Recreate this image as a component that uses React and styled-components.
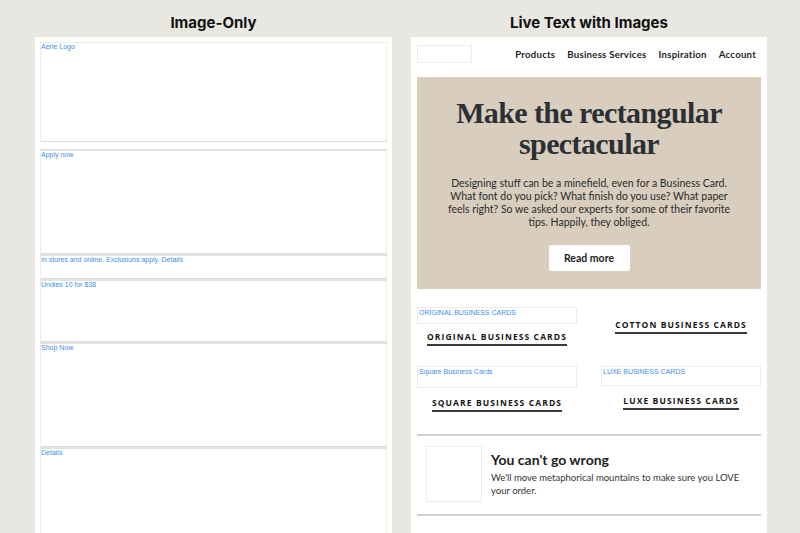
import React from 'react'
import styled, { createGlobalStyle } from 'styled-components'

const GlobalStyle = createGlobalStyle`
  html, body {
    margin: 0;
    padding: 0;
    background: #e9e7e2;
    height: 533px;
    overflow: hidden;
  }
  * {
    box-sizing: border-box;
  }
`

const Page = styled.div`
  display: grid;
  grid-template-columns: 357px 356px;
  column-gap: 19px;
  padding-left: 35px;
  height: 533px;
`

const Column = styled.div`
  display: flex;
  flex-direction: column;
  min-height: 0;
`

const Title = styled.h2`
  margin: 0;
  height: 37px;
  padding-top: 14px;
  text-align: center;
  font-family: Inter, 'Liberation Sans', sans-serif;
  font-weight: 700;
  font-size: 15px;
  line-height: 18px;
  color: #111;
`

const Panel = styled.div`
  flex: 1;
  background: #fff;
  padding: ${(p) => p.$pad};
  overflow: hidden;
`

/* left panel: broken image boxes */

const ImageBox = styled.div`
  height: ${(p) => p.$h}px;
  margin-top: ${(p) => p.$gap || 0}px;
  border: 1px solid #ececec;
  border-top: ${(p) => (p.$strong ? '2px solid #e2e2e2' : '1px solid #ececec')};
  border-bottom: 1px solid #dcdcdc;
  padding: 0;
  font-family: 'Liberation Sans', Arial, sans-serif;
  font-size: 7px;
  line-height: 8px;
  color: #3d8fe8;
`

/* right panel */

const Header = styled.div`
  display: flex;
  align-items: center;
  justify-content: space-between;
  height: 20px;
  padding-right: 5px;
  margin: 1px 0 13px;
`

const LogoBox = styled.div`
  width: 55px;
  height: 18px;
  border: 1px solid #ececec;
`

const Nav = styled.nav`
  display: flex;
  gap: 12px;
`

const NavLink = styled.a`
  font-family: Lato, 'Open Sans', sans-serif;
  font-weight: 700;
  font-size: 9.6px;
  letter-spacing: 0.25px;
  color: #1d1d1d;
`

const Hero = styled.section`
  background: #d9cebe;
  height: 212px;
  display: flex;
  flex-direction: column;
  align-items: center;
  padding-top: 20px;
`

const HeroTitle = styled.h1`
  margin: 0;
  font-family: 'Liberation Serif', 'Times New Roman', serif;
  font-weight: 700;
  font-size: 30px;
  line-height: 31px;
  letter-spacing: -0.6px;
  text-align: center;
  color: #2b3035;
  width: 280px;
`

const HeroText = styled.p`
  margin: 18px 0 0;
  width: 290px;
  font-family: Lato, 'Open Sans', sans-serif;
  font-size: 10.5px;
  line-height: 13px;
  text-align: center;
  color: #2a2a2a;
`

const Button = styled.button`
  margin-top: 16px;
  width: 81px;
  height: 26px;
  border: none;
  border-radius: 2px;
  background: #fff;
  font-family: Lato, 'Open Sans', sans-serif;
  font-weight: 700;
  font-size: 10.5px;
  color: #1d1d1d;
`

const CardGrid = styled.div`
  display: grid;
  grid-template-columns: 160px 160px;
  justify-content: space-between;
  row-gap: 20px;
  margin-top: 18px;
`

const Card = styled.div`
  display: flex;
  flex-direction: column;
  align-items: center;
  justify-content: ${(p) => (p.$center ? 'center' : 'flex-start')};
`

const CardImage = styled.div`
  align-self: stretch;
  height: ${(p) => p.$h}px;
  border: 1px solid #ececec;
  padding: 1px 0 0 1px;
  font-family: 'Liberation Sans', Arial, sans-serif;
  font-size: 7px;
  line-height: 8px;
  color: #3d8fe8;
  margin-bottom: ${(p) => p.$mb}px;
`

const CardLink = styled.a`
  font-family: 'Open Sans', Lato, sans-serif;
  font-weight: 700;
  font-size: 8.5px;
  letter-spacing: 1.1px;
  line-height: 12px;
  color: #151515;
  padding-bottom: 1px;
  border-bottom: 2px solid #3a3a3a;
`

const Divider = styled.hr`
  margin: ${(p) => p.$m};
  border: none;
  border-top: 2px solid #cfcfcf;
`

const Feature = styled.div`
  display: flex;
  gap: 9px;
  padding-left: 9px;
`

const FeatureImage = styled.div`
  flex: none;
  width: 56px;
  height: 56px;
  border: 1px solid #ececec;
`

const FeatureBody = styled.div`
  padding-top: 5px;
`

const FeatureTitle = styled.h3`
  margin: 0;
  font-family: Lato, 'Open Sans', sans-serif;
  font-weight: 700;
  font-size: 14px;
  line-height: 17px;
  color: #1d1d1d;
`

const FeatureText = styled.p`
  margin: 3px 0 0;
  width: 260px;
  font-family: Lato, 'Open Sans', sans-serif;
  font-size: 9.5px;
  line-height: 13px;
  color: #333;
`

const leftBoxes = [
  { label: 'Aerie Logo', h: 100 },
  { label: 'Apply now', h: 105, gap: 7, strong: true },
  { label: 'In stores and online. Exclusions apply. Details', h: 25, strong: true },
  { label: 'Undies 10 for $38', h: 63, strong: true },
  { label: 'Shop Now', h: 105, strong: true },
  { label: 'Details', h: 120, strong: true },
]

const navItems = ['Products', 'Business Services', 'Inspiration', 'Account']

const App = () => {
  return (
    <>
      <GlobalStyle />
      <Page>
        <Column>
          <Title>Image-Only</Title>
          <Panel $pad="5px 5px 0">
            {leftBoxes.map((box) => (
              <ImageBox key={box.label} $h={box.h} $gap={box.gap} $strong={box.strong}>
                {box.label}
              </ImageBox>
            ))}
          </Panel>
        </Column>
        <Column>
          <Title>Live Text with Images</Title>
          <Panel $pad="6px 6px 0">
            <Header>
              <LogoBox />
              <Nav>
                {navItems.map((item) => (
                  <NavLink key={item}>{item}</NavLink>
                ))}
              </Nav>
            </Header>
            <Hero>
              <HeroTitle>Make the rectangular spectacular</HeroTitle>
              <HeroText>
                Designing stuff can be a minefield, even for a Business Card.
                What font do you pick? What finish do you use? What paper
                feels right? So we asked our experts for some of their favorite
                tips. Happily, they obliged.
              </HeroText>
              <Button>Read more</Button>
            </Hero>
            <CardGrid>
              <Card>
                <CardImage $h={17} $mb={7}>ORIGINAL BUSINESS CARDS</CardImage>
                <CardLink>ORIGINAL BUSINESS CARDS</CardLink>
              </Card>
              <Card $center>
                <CardLink>COTTON BUSINESS CARDS</CardLink>
              </Card>
              <Card>
                <CardImage $h={22} $mb={9}>Square Business Cards</CardImage>
                <CardLink>SQUARE BUSINESS CARDS</CardLink>
              </Card>
              <Card>
                <CardImage $h={20} $mb={9}>LUXE BUSINESS CARDS</CardImage>
                <CardLink>LUXE BUSINESS CARDS</CardLink>
              </Card>
            </CardGrid>
            <Divider $m="22px 0 10px" />
            <Feature>
              <FeatureImage />
              <FeatureBody>
                <FeatureTitle>You can't go wrong</FeatureTitle>
                <FeatureText>
                  We'll move metaphorical mountains to make sure you LOVE your order.
                </FeatureText>
              </FeatureBody>
            </Feature>
            <Divider $m="12px 0 0" />
          </Panel>
        </Column>
      </Page>
    </>
  )
}

export default App
